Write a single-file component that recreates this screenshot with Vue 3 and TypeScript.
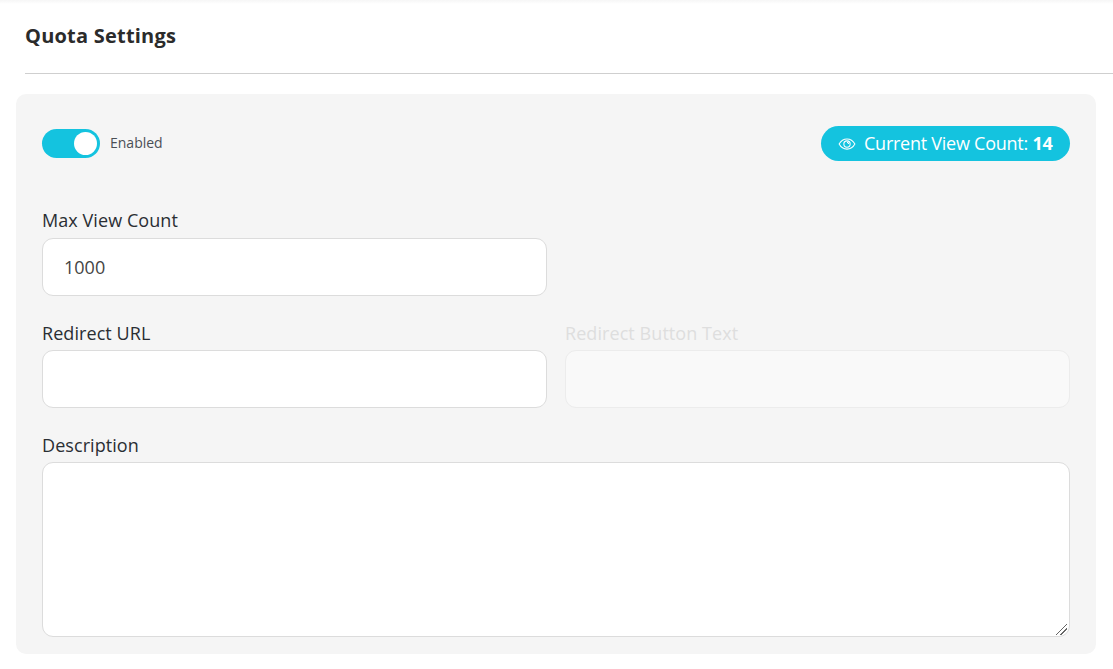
<script setup lang="ts">
import { ref } from 'vue'
const maxCount = ref('1000')
const url = ref('')
const btnText = ref('')
const description = ref('')
</script>

<template>
  <div class="page">
    <div class="top-shadow"></div>
    <header class="head">
      <h1 class="title">Quota Settings</h1>
    </header>
    <section class="panel">
      <div class="status">
        <div class="toggle-wrap">
          <span class="toggle"><span class="knob"></span></span>
          <span class="toggle-label">Enabled</span>
        </div>
        <div class="pill">
          <svg class="eye" viewBox="0 0 24 24" width="18" height="18" fill="none" stroke="#fff" stroke-width="1.4">
            <path d="M1.5 12C4 7.5 7.5 5.2 12 5.2S20 7.500 22.500 12C20 16.500 16.500 18.800 12 18.800S4 16.500 1.500 12Z" />
            <circle cx="12" cy="12" r="4.200" />
            <path d="M12 9.800a2.200 2.200 0 0 1 2.200 2.200" />
          </svg>
          <span class="pill-text">Current View Count: <b>14</b></span>
        </div>
      </div>

      <div class="grid row-max">
        <label class="field">
          <span class="label first">Max View Count</span>
          <input v-model="maxCount" class="input" type="text" />
        </label>
      </div>

      <div class="grid row-url">
        <label class="field">
          <span class="label">Redirect URL</span>
          <input v-model="url" class="input" type="text" />
        </label>
        <label class="field disabled">
          <span class="label">Redirect Button Text</span>
          <input v-model="btnText" class="input" type="text" disabled />
        </label>
      </div>

      <label class="field row-desc">
        <span class="label">Description</span>
        <textarea v-model="description" class="input area"></textarea>
      </label>
    </section>
  </div>
</template>

<style>
html, body { margin: 0; background: #fff; }
</style>

<style scoped>
.page {
  height: 669px;
  box-sizing: border-box;
  overflow: hidden;
  font-family: "Open Sans", "Liberation Sans", sans-serif;
  color: #212529;
  background: #fff;
}
.top-shadow {
  height: 4px;
  background: linear-gradient(#f6f6f6, #fff);
}
.head {
  margin-left: 25px;
  height: 70px;
  box-sizing: border-box;
  border-bottom: 1px solid #cfcfcf;
  padding-top: 18px;
}
.title {
  margin: 0;
  font-size: 20px;
  line-height: 27px;
  font-weight: 700;
  letter-spacing: 0.22px;
  color: #2b2b2b;
}
.panel {
  margin: 20px 17px 0 16px;
  height: 560px;
  box-sizing: border-box;
  padding: 32px 26px 0;
  background: #f5f5f5;
  border-radius: 10px;
}
.status {
  display: flex;
  align-items: center;
  justify-content: space-between;
  height: 35px;
}
.toggle-wrap {
  display: flex;
  align-items: center;
  gap: 10px;
}
.toggle {
  width: 58px;
  height: 29px;
  border-radius: 15px;
  background: #14c3df;
  display: flex;
  align-items: center;
  justify-content: flex-end;
  padding-right: 3px;
  box-sizing: border-box;
}
.knob {
  width: 23px;
  height: 23px;
  border-radius: 50%;
  background: #fff;
}
.toggle-label {
  font-size: 14px;
  line-height: 19px;
  color: #4a4f55;
  margin-top: -2px;
}
.pill {
  display: flex;
  align-items: center;
  gap: 8px;
  height: 35px;
  width: 249px;
  box-sizing: border-box;
  padding-left: 17px;
  border-radius: 18px;
  background: #14c3df;
  color: #fff;
  font-size: 18px;
  letter-spacing: -0.25px;
}
.pill-text {
  margin-top: -2px;
}
.pill b { font-weight: 700; }
.eye { flex: none; }
.grid {
  display: grid;
  grid-template-columns: 505px 505px;
  column-gap: 18px;
}
.row-max { margin-top: 47px; }
.row-url { margin-top: 24px; }
.row-desc { display: block; margin-top: 25px; }
.field { display: block; }
.label {
  display: block;
  font-size: 18px;
  line-height: 24px;
  font-weight: 500;
  letter-spacing: 0.07px;
  margin: 1px 0 5px;
  color: #2a2e33;
}
.label.first { margin: 0 0 6px; }
.input {
  display: block;
  width: 100%;
  height: 58px;
  box-sizing: border-box;
  border: 1px solid #dcdcdc;
  border-radius: 11px;
  background: #fff;
  padding: 0 21px;
  font-family: inherit;
  font-size: 18px;
  color: #444;
  outline: none;
}
.area {
  height: 175px;
  padding: 12px 22px;
  resize: vertical;
}
.area::-webkit-resizer {
  background: linear-gradient(135deg, transparent 46%, #666 46% 54%, transparent 54% 65%, #666 65% 73%, transparent 73%) 2px 3px / 11px 11px no-repeat;
}
.disabled .label { color: #dedede; }
.disabled .input {
  background: #f9f9f9;
  border-color: #ececec;
}
</style>
